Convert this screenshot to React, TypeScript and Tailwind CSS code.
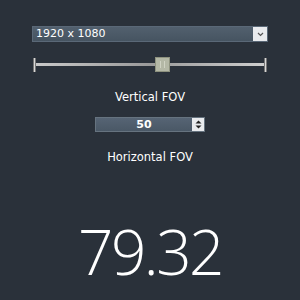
export default function App() {
  return (
    <div
      className="w-[300px] h-[300px] bg-[#2a313a] flex flex-col items-center overflow-hidden"
      style={{ fontFamily: '"DejaVu Sans", sans-serif' }}
    >
      {/* resolution select */}
      <div className="mt-[26px] w-[236px] h-[16px] flex bg-gradient-to-b from-[#52606e] to-[#465461] border border-[#5a6877]">
        <span className="flex-1 pl-[3px] text-[11px] leading-[14px] text-white">1920 x 1080</span>
        <div className="w-[14px] h-full bg-[#e9ebee] flex items-center justify-center">
          <svg width="7" height="5" viewBox="0 0 7 5">
            <path d="M1 1 L3.5 3.5 L6 1" stroke="#555" strokeWidth="1.2" fill="none" />
          </svg>
        </div>
      </div>

      {/* slider */}
      <div className="mt-[15px] w-[234px] h-[15px] flex items-center">
        <div className="w-[3px] h-[14px] bg-[#d8d8d8] border-x border-[#777]" />
        <div className="relative flex-1 h-[3px] bg-gradient-to-r from-[#c9c9c9] via-[#9a9a9a] to-[#cfcfcf]">
          <div className="absolute left-[119px] top-[-6px] w-[15px] h-[15px] bg-[#b4b8a6] border border-[#8e927f] flex items-center justify-center">
            <div className="w-[5px] h-[7px] border-x border-[#d0d3c4]" />
          </div>
        </div>
        <div className="w-[3px] h-[14px] bg-[#d8d8d8] border-x border-[#777]" />
      </div>

      <div className="mt-[18px] text-[11.5px] text-white leading-[14px]">Vertical FOV</div>

      {/* spinbox */}
      <div className="mt-[13px] w-[110px] h-[15px] flex bg-gradient-to-b from-[#566474] to-[#4a5866] border border-[#66737f]">
        <span className="flex-1 text-center text-[11px] leading-[13px] font-semibold text-white">50</span>
        <div className="w-[12px] h-full bg-[#e9ebee] flex flex-col items-center justify-center gap-[1px]">
          <svg width="7" height="4" viewBox="0 0 7 4"><path d="M0.5 3.5 L3.5 0.5 L6.5 3.5 Z" fill="#222" /></svg>
          <svg width="7" height="4" viewBox="0 0 7 4"><path d="M0.5 0.5 L3.5 3.5 L6.5 0.5 Z" fill="#222" /></svg>
        </div>
      </div>

      <div className="mt-[18px] text-[11.5px] text-white leading-[14px]">Horizontal FOV</div>

      <div
        className="mt-[56px] text-[62px] leading-[62px] text-white font-light tracking-[-2.5px]"
        style={{ fontFamily: '"Open Sans", sans-serif' }}
      >
        79.32
      </div>
    </div>
  )
}
